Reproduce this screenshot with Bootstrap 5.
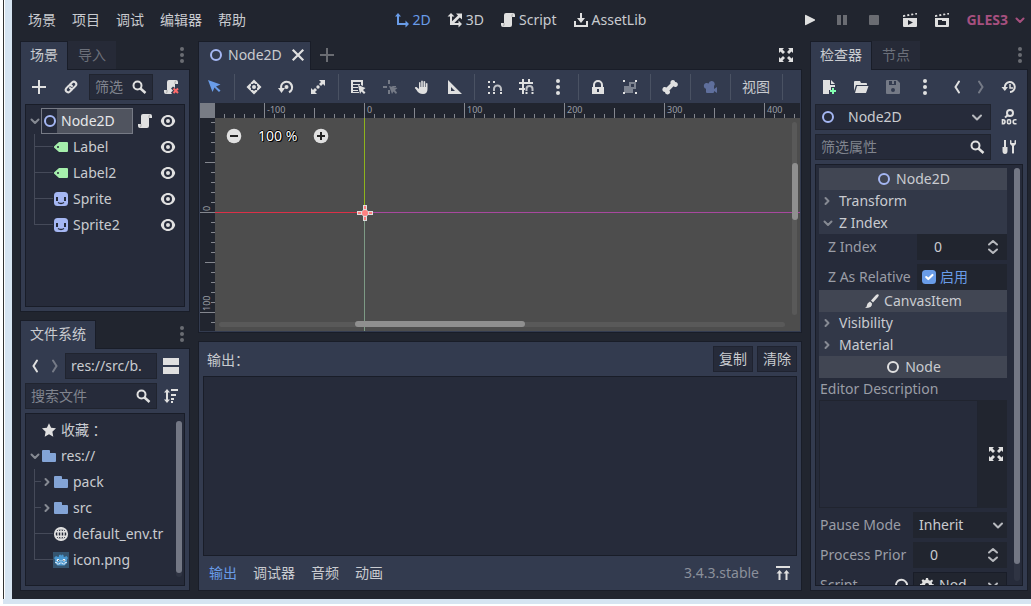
<!DOCTYPE html>
<html lang="zh-CN">
<head>
<meta charset="utf-8">
<meta name="viewport" content="width=device-width, initial-scale=1">
<title>Godot Engine - Node2D</title>
<link href="https://cdn.jsdelivr.net/npm/bootstrap@5.3.0/dist/css/bootstrap.min.css" rel="stylesheet">
<style>
:root{--bg:#21252f;--panel:#333b4f;--dark:#262b3a;--edge:#191d28;--text:#c9cbd0;--dim:#8f939d;--accent:#699ce8;--icon:#e0e0e0}
body{font:14px/20px "Noto Sans","Noto Sans CJK SC",sans-serif;color:var(--text);background:#d6e4f1;overflow:hidden}
.desk{border-bottom:2px solid #fff;border-left:3px solid #fff;padding:0 0 5px 0}
.desk-edge{width:9px;flex:none;border-left:1px solid #333;box-shadow:inset 1px 0 #fff}
.editor{background:var(--bg);min-width:0}
svg{display:block;flex:none}
.ic{width:16px;height:16px;fill:var(--icon);color:var(--icon)}
.off{opacity:.38}
.blue{color:#a5b7f3}
.colon{font-family:"Noto Sans CJK TC",sans-serif}
button{background:none;border:0;padding:0;color:inherit;font:inherit}
.topbar{display:grid;grid-template-columns:1fr auto 1fr;height:40px;padding:0 3px 0 0}
.topbar a,.bottom a{color:var(--text);text-decoration:none}
.topbar .modes a{display:flex;align-items:center;gap:3px}
.topbar a.on,.bottom a.on{color:var(--accent)}
.topbar a.on .ic{fill:var(--accent);color:var(--accent)}
.work{display:grid;grid-template-columns:170px minmax(0,1fr) 218px;gap:8px;padding:1px 3px 8px 8px;min-height:0}
.work>div{min-height:0;min-width:0;gap:8px}
.dock{min-height:0}
.half{flex:1 1 0}
.tabs{height:28px;flex:none}
.tabs .nav-tab{height:28px;padding:0 10px;background:#262a37;color:#6c707a}
.tabs .nav-tab.on{height:29px;padding:0 9px 2px;background:var(--panel);color:var(--text);border:1px solid var(--edge);border-bottom:0;position:relative;z-index:1}
.pane{background:var(--panel);border:1px solid var(--edge);padding:4px;min-height:0}
.bar{height:26px;margin-bottom:4px;flex:none}
.bar .sq,.bar .slim{width:28px;height:26px;display:flex;align-items:center;justify-content:center;flex:none}
.bar .slim{width:20px}
.field{background:var(--dark);border:1px solid #20242f;height:26px;min-width:0;display:flex;align-items:center;padding:0 5px}
.field input:not(.form-check-input),.field select{background:transparent;border:0;outline:0;color:var(--text);padding:0;min-width:0;width:100%;font:inherit;border-radius:0;box-shadow:none}
.field input::placeholder{color:#80848e;opacity:1}
.form-select{--bs-form-select-bg-img:url("data:image/svg+xml,%3csvg xmlns='http://www.w3.org/2000/svg' viewBox='0 0 16 16'%3e%3cpath fill='none' stroke='%23b8babf' stroke-width='2' stroke-linecap='round' stroke-linejoin='round' d='M4 6.5l4 4 4-4'/%3e%3c/svg%3e");background-image:var(--bs-form-select-bg-img)!important;background-repeat:no-repeat!important;background-position:right center!important;background-size:16px 16px!important;cursor:default}
.tree{background:var(--dark);border:1px solid var(--edge);min-height:0;overflow:hidden;padding-top:3px}
.item{height:26px;white-space:nowrap}
.stem{width:19px;height:26px;margin-left:8px;flex:none;background:linear-gradient(#454a59,#454a59) 0 0/1px 100% no-repeat,linear-gradient(#454a59,#454a59) 0 12px/100% 1px no-repeat}
.stem.end{background-size:1px 13px,100% 1px}
.stem.short{width:7px}
.twist{width:12px;height:16px;color:#868a93}
.root-twist{margin-left:3px}
.picked{border:1px solid #767a85;background:#50545f;width:92px;height:26px;color:#e6e7ea}
.picked span:first-child{background:var(--dark);width:15px;height:24px}
.btns>*{width:32px;display:flex;justify-content:center;align-items:center;height:33px}
.btns>:first-child{width:31px}
.btns>.vr-line{width:8px}
.vr-line::before{content:"";width:1px;height:26px;background:#4a5263}
.canvas-grid{display:grid;grid-template:15px minmax(0,1fr)/15px minmax(0,1fr);min-height:0;margin:0 1px 1px}
.ruler{background:var(--bg)}
.ruler text{font-size:9px;fill:#9a9da4}
.stage{background:#4d4d4d;position:relative;overflow:hidden}
.stage>*{position:absolute}
.ax-neg{left:0;width:149px;top:94px;height:1px;background:#dc3048}
.ax-pos{left:149px;right:0;top:94px;height:1px;background:#a8489f}
.ax-up{top:0;height:94px;left:149px;width:1px;background:#8eb31c}
.ax-down{top:94px;bottom:0;left:149px;width:1px;background:#7d9a85}
.zoomer{left:11px;top:8px;height:20px}
.zoomer span{color:#fff;text-shadow:1px 1px #000,-1px 0 #000,0 -1px #000,1px 0 #000}
.track{background:#595959;border-radius:3px}
.thumb{background:#8f8f8f;border-radius:3px;position:absolute}
.hbar{left:4px;right:15px;bottom:4px;height:5px}.hbar .thumb{left:24%;width:30%;top:-1px;height:6px}
.vbar{right:3px;top:4px;bottom:16px;width:5px}.vbar .thumb{top:21%;height:30%;left:0;width:6px}
.darkbtn{background:var(--dark);border:1px solid #1f2330;height:26px;padding:0 5px;border-radius:0}
.log{background:var(--dark);border:1px solid var(--edge);height:180px;resize:none;border-radius:0;display:block;width:100%;outline:0;color:var(--text)}
.bottom{height:34px;padding:0 6px}
.cat{background:#414653;height:22px}
.sect{background:#323848;height:22px}
.prop{height:26px}
.prop label,.lbl{color:#9a9da6;white-space:nowrap;overflow:hidden;padding-left:1px}
.prop .field{background:var(--bg);border-color:var(--bg);height:26px;flex:none}
.w-a{width:90px}.w-b{width:94px}
.form-check-input{margin:0;width:14px;height:14px;border:0;border-radius:2px;flex:none}
.form-check-input:checked{background-color:var(--accent)}
.note-box{background:var(--bg)}
.note-box button{width:32px;padding-left:10px}
.note{background:var(--dark);border:1px solid #20242f;height:108px;resize:none;border-radius:0;outline:0;min-width:0;color:var(--text)}
.rail{width:6px;flex:none;background:#2f3443;border-radius:3px}
.rail div{background:#737784;border-radius:3px}
.api{color:#a6507f!important;font-weight:700}
</style>
</head>
<body class="m-0">
<svg width="0" height="0" class="position-absolute" aria-hidden="true">
<defs>
<symbol id="ring" viewBox="0 0 16 16"><circle cx="8" cy="8" r="5" fill="none" stroke="currentColor" stroke-width="2"/></symbol>
<symbol id="plus" viewBox="0 0 16 16"><path d="M7 1h2v6h6v2H9v6H7V9H1V7h6z"/></symbol>
<symbol id="cross" viewBox="0 0 16 16"><path d="M3.500 3.500l9 9m0-9l-9 9" fill="none" stroke="currentColor" stroke-width="2.200" stroke-linecap="square"/></symbol>
<symbol id="link" viewBox="0 0 16 16"><g fill="none" stroke="currentColor" stroke-width="2" stroke-linecap="round"><path d="M7 5.500L9.300 3.200a2.500 2.500 0 0 1 3.500 3.500L10.500 9a2.500 2.500 0 0 1-3.500 0"/><path d="M9 10.500l-2.300 2.300a2.500 2.500 0 0 1-3.500-3.500L5.500 7a2.500 2.500 0 0 1 3.500 0"/></g></symbol>
<symbol id="search" viewBox="0 0 16 16"><circle cx="6.500" cy="6.500" r="4" fill="none" stroke="currentColor" stroke-width="2"/><path d="M9.500 9.500l5 4.500" stroke="currentColor" stroke-width="2.500"/></symbol>
<symbol id="script" viewBox="0 0 16 16"><path d="M6 1a2 2 0 0 0-2 2v8H1v2a2 2 0 0 0 2 2h7a2 2 0 0 0 2-2V5h3V3a2 2 0 0 0-2-2z"/><path d="M12 5V3a1 1 0 0 1 1-1M4 11v2a1 1 0 0 1-1 1" fill="none" stroke="#aaa" stroke-width="1"/></symbol>
<symbol id="scriptx" viewBox="0 0 16 16"><path d="M6 1a2 2 0 0 0-2 2v8H1v2a2 2 0 0 0 2 2h6l-1-1.500 2-2L8 9.500l2-2 2 1.500V5h3V3a2 2 0 0 0-2-2z"/><path d="M12 5V3a1 1 0 0 1 1-1M4 11v2a1 1 0 0 1-1 1" fill="none" stroke="#aaa"/><path d="M10.500 9.500l4.500 4.500m0-4.500l-4.500 4.500" stroke="#ff6b6b" stroke-width="2"/></symbol>
<symbol id="eye" viewBox="0 0 16 16"><path fill-rule="evenodd" d="M8 2C4.500 2 2 4.300.900 7.500v1C2 11.700 4.500 14 8 14s6-2.300 7.100-5.500v-1C14 4.300 11.500 2 8 2zm0 2a4 4 0 1 1 0 8 4 4 0 0 1 0-8zm0 2a2 2 0 1 0 0 4 2 2 0 0 0 0-4z"/></symbol>
<symbol id="tag" viewBox="0 0 16 16"><path fill="#a5efac" fill-rule="evenodd" d="M6 3L1 7.500v1L6 13h8a1 1 0 0 0 1-1V4a1 1 0 0 0-1-1zM5 7a1 1 0 1 1 0 2 1 1 0 0 1 0-2z"/></symbol>
<symbol id="face" viewBox="0 0 16 16"><rect x="1" y="1" width="14" height="14" rx="3.500" fill="#a5b7f3"/><path fill="#262b3a" d="M3 6h2v4H3zM11 6h2v4h-2z"/><path d="M5 11.500q3 2 6 0" fill="none" stroke="#262b3a" stroke-width="1.500"/></symbol>
<symbol id="down" viewBox="0 0 16 16"><path d="M4.500 6.500L8 10l3.500-3.500" fill="none" stroke="currentColor" stroke-width="2" stroke-linecap="round" stroke-linejoin="round"/></symbol>
<symbol id="right" viewBox="0 0 16 16"><path d="M6.500 5L9.500 8l-3 3" fill="none" stroke="currentColor" stroke-width="2" stroke-linecap="round" stroke-linejoin="round"/></symbol>
<symbol id="fwd" viewBox="0 0 16 16"><path d="M6 2.500L9.500 8 6 13.500" fill="none" stroke="currentColor" stroke-width="2" stroke-linecap="round"/></symbol>
<symbol id="back" viewBox="0 0 16 16"><path d="M10 2.500L6.500 8l3.500 5.500" fill="none" stroke="currentColor" stroke-width="2" stroke-linecap="round"/></symbol>
<symbol id="dots" viewBox="0 0 16 16"><circle cx="8" cy="2" r="2"/><circle cx="8" cy="8" r="2"/><circle cx="8" cy="14" r="2"/></symbol>
<symbol id="split" viewBox="0 0 16 16"><path d="M0 0h16v7H0zM0 9h16v7H0z"/></symbol>
<symbol id="sort" viewBox="0 0 16 16"><path d="M4 1L1 4.500h2v7H1L4 15l3-3.500H5v-7h2zM8 1h7v2H8zM8 6h5v2H8zM8 10h3v2H8zM8 13h2v2H8z"/></symbol>
<symbol id="star" viewBox="0 0 16 16"><path d="M8 1.200l2.100 4.500 4.900.600-3.600 3.400.900 5L8 12.300l-4.300 2.400.900-5L1 6.300l4.900-.600z"/></symbol>
<symbol id="folder" viewBox="0 0 16 16"><path fill="#83a4d6" d="M2 2a1 1 0 0 0-1 1v10a1 1 0 0 0 1 1h12a1 1 0 0 0 1-1V6a1 1 0 0 0-1-1H9V3a1 1 0 0 0-1-1z"/></symbol>
<symbol id="globe" viewBox="0 0 16 16"><g fill="none" stroke="currentColor" stroke-width="1.500"><circle cx="8" cy="8" r="6.200" stroke-width="1.800"/><ellipse cx="8" cy="8" rx="3" ry="6"/><path d="M2 5.800h12M2 10.200h12M8 2v12"/></g></symbol>
<symbol id="godot" viewBox="0 0 16 16"><path fill="#355570" d="M0 0h16v16H0z"/><path fill="#4a98d0" d="M1 6l2-2 2 1 1-.500L6 3l1.500-.500L8 3.500h.5L9 2.500l1.500.500v1.500l1 .5 2-1 1.500 2-1 1.500V11l-2.500 2.500h-7L2 11V7.500z"/><circle cx="5" cy="8.200" r="1.300" fill="#fff"/><circle cx="11" cy="8.200" r="1.300" fill="#fff"/><path d="M5 8.500h.8M10.500 8.500h.8" stroke="#333" stroke-width="1"/><path d="M2 10.500h2v1.500h2.500v-1h3v1H12v-1.500h2M8 8v1.500" fill="none" stroke="#e4eef6" stroke-width=".8"/></symbol>
<symbol id="ax2" viewBox="0 0 16 16"><path d="M4 1L1 4.500h2V13h8.500v2.500L15 12l-3.500-3.500V11H5V4.500h2z"/></symbol>
<symbol id="ax3" viewBox="0 0 16 16"><path d="M4 1L.500 4.500H3V13h8.500v2.500L15 12l-3.500-3.500V11H7.300L12.800 5.500 15 7.500V1.500H9L11 3.500 5 9.300V4.500h2.500z"/></symbol>
<symbol id="dl" viewBox="0 0 16 16"><path d="M7 1h2v5h3l-4 5-4-5h3zM1 9h2v4h10V9h2v6H1z"/></symbol>
<symbol id="play" viewBox="0 0 16 16"><path d="M3 3.500q0-1 1-.500l9 4.500v1L4 13q-1 .500-1-.500z"/></symbol>
<symbol id="pause" viewBox="0 0 16 16"><path d="M3 3h4v10H3zM9 3h4v10H9z"/></symbol>
<symbol id="stop" viewBox="0 0 16 16"><rect x="3" y="3" width="10" height="10" rx="1"/></symbol>
<symbol id="clap" viewBox="0 0 16 16"><path fill-rule="evenodd" d="M1 6h14v8a1 1 0 0 1-1 1H2a1 1 0 0 1-1-1zm5 2v5l5-2.500zM1 3.200l2-.400.500 1.700-2.500.400zM5 2.500l2-.400.500 1.700-2 .400zM9 1.800l2-.400.500 1.700-2 .400zM13 1.200l2-.300V2.500l-1.500.300z"/></symbol>
<symbol id="clapf" viewBox="0 0 16 16"><path fill-rule="evenodd" d="M1 6h14v8a1 1 0 0 1-1 1H2a1 1 0 0 1-1-1zm3 2v5h8V9H8V8zM1 3.200l2-.400.500 1.700-2.500.400zM5 2.500l2-.400.500 1.700-2 .400zM9 1.800l2-.400.500 1.700-2 .400zM13 1.200l2-.300V2.500l-1.500.300z"/></symbol>
<symbol id="full" viewBox="0 0 16 16"><path d="M1 1h5L4.500 2.500l2.500 2.500-2 2-2.500-2.500L1 6zM15 1v5l-1.500-1.500L11 7 9 5l2.500-2.500L10 1zM1 15v-5l1.500 1.500L5 9l2 2-2.500 2.500L6 15zM15 15h-5l1.500-1.500L9 11l2-2 2.500 2.500L15 10z"/></symbol>
<symbol id="cursor" viewBox="0 0 16 16"><path d="M1 1l4.500 12 2-4.500 4.500 4.500 1.500-1.500L9 7.500l4.500-2z"/></symbol>
<symbol id="move" viewBox="0 0 16 16"><circle cx="8" cy="8" r="2"/><path d="M8 .500L4.500 4v1h2.200L8 4l1.300 1h2.200V4zM8 15.500L4.500 12v-1h2.200L8 12l1.300-1h2.200v1zM.500 8L4 4.500h1v2.200L4 8l1 1.300v2.200H4zM15.500 8L12 4.500h-1v2.200L12 8l-1 1.300v2.200h1z"/></symbol>
<symbol id="rotate" viewBox="0 0 16 16"><path d="M3.200 9.500A5.500 5.500 0 1 1 11 13.200" fill="none" stroke="currentColor" stroke-width="2.200"/><path d="M0 9h7l-3.500 5z"/><circle cx="8.500" cy="8" r="2"/></symbol>
<symbol id="reload" viewBox="0 0 16 16"><path d="M3.200 9.500A5.500 5.500 0 1 1 11 13.200" fill="none" stroke="currentColor" stroke-width="2"/><path d="M0 8h7l-3.500 5z"/></symbol>
<symbol id="scale" viewBox="0 0 16 16"><path d="M9 1h6v6l-2-2-2 2-2-2 2-2zM7 15H1V9l2 2 2-2 2 2-2 2z"/><circle cx="8" cy="8" r="1.700"/></symbol>
<symbol id="list" viewBox="0 0 16 16"><path fill-rule="evenodd" d="M1 1h12v6l-2-1V3H3v2h7v1H3v2h5v1H3v2h5v1H3v1h6v1H1z"/><path d="M8 6l2 9 1.500-2.500L14 15l1.500-1.500L13 11l2.500-2z"/></symbol>
<symbol id="pivot" viewBox="0 0 16 16"><path d="M6 1h2v4H6zM1 7h4v2H1zM10 7h4v1h-4zM6 11h2v4H6zM7 7l3 8 1.500-2.500L14 15l1-1.500L13 11l2.500-2z"/></symbol>
<symbol id="hand" viewBox="0 0 16 16"><path d="M5 3.500q1-1 1.500 0V8h.7V2q.8-1.200 1.600 0v6h.7V2.500q.9-1 1.700 0V8h.6V4.500q1-1 1.700 0V10q0 5-4.500 5T2.500 11L.800 9q.200-1.500 1.700-1L5 10z"/></symbol>
<symbol id="tri" viewBox="0 0 16 16"><path fill-rule="evenodd" d="M2 1v14h14zm3 7l4 4H5z"/></symbol>
<symbol id="snap" viewBox="0 0 16 16"><path d="M2 2h2v2H2zM7 2h2v2H7zM2 7h2v2H2zM2 13h2v2H2zM7 13h2v2H7zM14 13h2v2h-2z"/><path d="M8 12v-2a3.500 3.500 0 0 1 7 0v2" fill="none" stroke="#bfc1c6" stroke-width="2"/></symbol>
<symbol id="grid" viewBox="0 0 16 16"><path d="M4 0h2v3h4V0h2v3h3v2H6v4h1v2H6v4H4v-4H1V9h3V5H1V3h3z"/><path d="M8.500 12v-2a3 3 0 0 1 6 0v2" fill="none" stroke="#bfc1c6" stroke-width="2"/><path d="M7.500 13h2v2h-2zM13.500 13h2v2h-2z"/></symbol>
<symbol id="lock" viewBox="0 0 16 16"><path fill-rule="evenodd" d="M8 1a5 5 0 0 0-5 5v2H2v7h12V8h-1V6a5 5 0 0 0-5-5zm0 2a3 3 0 0 1 3 3v2H5V6a3 3 0 0 1 3-3zM7 10h2v3H7z"/></symbol>
<symbol id="group" viewBox="0 0 16 16"><path fill="#7d8390" fill-rule="evenodd" d="M7 3h7v7h-3v4H2V7h5zm2 2v3h3V5z"/><path d="M1 1h2v2H1zM13 1h2v2h-2zM1 13h2v2H1zM13 13h2v2h-2z"/></symbol>
<symbol id="bone" viewBox="0 0 16 16"><path d="M11 1a2.500 2.500 0 0 0-2.400 3.400L4.500 8.600A2.500 2.500 0 1 0 3 13a2.500 2.500 0 1 0 4.400-1.600l4.100-4.200A2.500 2.500 0 1 0 13.200 3 2.400 2.400 0 0 0 11 1z"/></symbol>
<symbol id="cam" viewBox="0 0 16 16"><path fill="#5f6f9c" d="M9.500 2A3 3 0 0 0 6.600 4.500 3 3 0 1 0 4 9.800V13a1 1 0 0 0 1 1h6a1 1 0 0 0 1-1v-1l3 2V8l-3 2V7A3 3 0 0 0 9.500 2z"/></symbol>
<symbol id="newdoc" viewBox="0 0 16 16"><path d="M2 1h7v5h5v2h-4v3H8v4H2zM10 1l4 4h-4z"/><path fill="#84ffb1" d="M11 9h2v2h2v2h-2v2h-2v-2H9v-2h2z"/></symbol>
<symbol id="load" viewBox="0 0 16 16"><path d="M2 2a1 1 0 0 0-1 1v9l2-6h11V5a1 1 0 0 0-1-1H8L7 2zM4 7h11.500l-2.300 6.500q-.200.500-1 .500H2z"/></symbol>
<symbol id="save" viewBox="0 0 16 16"><path fill-rule="evenodd" d="M2 1h10l3 3v10a1 1 0 0 1-1 1H2a1 1 0 0 1-1-1V2a1 1 0 0 1 1-1zm2 1v4h7V2H9v3H7V2zm4 7a2 2 0 1 0 0 4 2 2 0 0 0 0-4z"/></symbol>
<symbol id="hist" viewBox="0 0 16 16"><path d="M3.800 8.500A5 5 0 1 1 9 13" fill="none" stroke="currentColor" stroke-width="2"/><path d="M.500 8h6.500L3.800 12z"/><path d="M9 5v4h3" fill="none" stroke="currentColor" stroke-width="1.500"/></symbol>
<symbol id="doc" viewBox="0 0 16 16"><circle cx="9" cy="4" r="3" fill="none" stroke="currentColor" stroke-width="2"/><path d="M7 6L4 8.500" stroke="currentColor" stroke-width="2"/><path d="M1.500 10.700v4h.500q2 0 2-2t-2-2z" fill="none" stroke="currentColor" stroke-width="1.600"/><rect x="6.500" y="10.700" width="3" height="4" rx="1" fill="none" stroke="currentColor" stroke-width="1.600"/><path d="M15.500 10.700h-1.500q-1.800 0-1.800 2t1.800 2h1.500" fill="none" stroke="currentColor" stroke-width="1.600"/></symbol>
<symbol id="tools" viewBox="0 0 16 16"><path d="M3 1h2v7h1.500v4q0 3-2.500 3t-2.500-3V8H3zM9 1v4l2 2v7q1 1.500 2 0V7l2-2V1l-1.500.500V4h-3V1.500z"/></symbol>
<symbol id="brush" viewBox="0 0 16 16"><path d="M14.500 1.500q1 1-1 3L9 9.500 7 7.500l4.500-5q2-2 3-1zM6 8.500L8 10.500q.500 4.500-7 4.500 2-1 2-3t3-3.500z"/></symbol>
<symbol id="spin" viewBox="0 0 16 16"><path d="M4 5.500L8 2l4 3.500M4 10.500L8 14l4-3.500" fill="none" stroke="#b8babf" stroke-width="2" stroke-linecap="round" stroke-linejoin="round"/></symbol>
<symbol id="up2" viewBox="0 0 16 16"><path d="M1 1h14v2H1zM4.500 5l3 3.500h-2V15h-2V8.500h-2zM11.500 5l3 3.500h-2V15h-2V8.500h-2z"/></symbol>
<symbol id="gear" viewBox="0 0 16 16"><path fill-rule="evenodd" d="M7 1h2l.5 2 1.600.7L13 2.500 14 4l-1.300 1.600.5 1.400 1.800.500v2l-2 .500-.700 1.500 1 1.900-1.500 1.300-1.900-1-1.400.500L8 15l-1.500-1.300-1.400-.500-1.800.800L2 12.500 3.200 11l-.700-1.500-1.500-.500V7l2-.500.500-1.400L2.500 3.500 4 2.200l1.600 1L6.500 3zm1 5a2 2 0 1 0 0 4 2 2 0 0 0 0-4z"/></symbol>
<symbol id="zin" viewBox="0 0 16 16"><circle cx="8" cy="8" r="7.300"/><path d="M4 8h8M8 4v8" stroke="#222" stroke-width="2"/></symbol>
<symbol id="zout" viewBox="0 0 16 16"><circle cx="8" cy="8" r="7.300"/><path d="M4 8h8" stroke="#222" stroke-width="2"/></symbol>
<pattern id="tickx" x="49" width="100" height="15" patternUnits="userSpaceOnUse"><path fill="#84878f" d="M0 0h1v15H0zM50 5h1v10h-1zM10 11h1v4h-1zM20 11h1v4h-1zM30 11h1v4h-1zM40 11h1v4h-1zM60 11h1v4h-1zM70 11h1v4h-1zM80 11h1v4h-1zM90 11h1v4h-1z"/></pattern>
<pattern id="ticky" y="-6" width="15" height="100" patternUnits="userSpaceOnUse"><path fill="#84878f" d="M0 0h15v1H0zM5 50h10v1H5zM11 10h4v1h-4zM11 20h4v1h-4zM11 30h4v1h-4zM11 40h4v1h-4zM11 60h4v1h-4zM11 70h4v1h-4zM11 80h4v1h-4zM11 90h4v1h-4z"/></pattern>
</defs>
</svg>

<div class="desk vh-100 d-flex">
<div class="desk-edge"></div>
<div class="editor flex-grow-1 d-flex flex-column">
  <header class="topbar align-items-center flex-shrink-0">
    <nav class="d-flex gap-3 ps-3 ms-n1"><a href="#">场景</a><a href="#">项目</a><a href="#">调试</a><a href="#">编辑器</a><a href="#">帮助</a></nav>
    <nav class="modes d-flex gap-3">
      <a href="#" class="on"><svg class="ic"><use href="#ax2"/></svg>2D</a>
      <a href="#"><svg class="ic"><use href="#ax3"/></svg>3D</a>
      <a href="#"><svg class="ic"><use href="#script"/></svg>Script</a>
      <a href="#"><svg class="ic"><use href="#dl"/></svg>AssetLib</a>
    </nav>
    <div class="d-flex align-items-center justify-content-end gap-3">
      <button aria-label="运行"><svg class="ic"><use href="#play"/></svg></button>
      <button aria-label="暂停"><svg class="ic off"><use href="#pause"/></svg></button>
      <button aria-label="停止" class="me-1"><svg class="ic off"><use href="#stop"/></svg></button>
      <button aria-label="运行场景"><svg class="ic"><use href="#clap"/></svg></button>
      <button aria-label="运行自定义场景"><svg class="ic"><use href="#clapf"/></svg></button>
      <button class="api d-flex align-items-center gap-1">GLES3<svg width="16" height="16"><use href="#down"/></svg></button>
    </div>
  </header>

  <main class="work flex-grow-1">
    <div class="d-flex flex-column">
      <section class="dock half d-flex flex-column">
        <div class="tabs d-flex"><button class="nav-tab on">场景</button><button class="nav-tab">导入</button><button class="ms-auto align-self-center" aria-label="菜单"><svg class="ic off"><use href="#dots"/></svg></button></div>
        <div class="pane flex-grow-1 d-flex flex-column">
          <div class="bar d-flex gap-1">
            <button class="sq" aria-label="添加"><svg class="ic"><use href="#plus"/></svg></button>
            <button class="sq" aria-label="实例化"><svg class="ic"><use href="#link"/></svg></button>
            <div class="field flex-grow-1"><input aria-label="筛选" placeholder="筛选"><svg class="ic"><use href="#search"/></svg></div>
            <button class="sq" aria-label="移除脚本"><svg class="ic"><use href="#scriptx"/></svg></button>
          </div>
          <div class="tree flex-grow-1 pe-2">
            <div class="item d-flex align-items-center"><svg class="twist root-twist" viewBox="2 0 12 16"><use href="#down" width="16" height="16"/></svg>
              <div class="picked d-flex align-items-center me-1"><span class="d-flex align-items-center"><svg class="ic blue"><use href="#ring"/></svg></span><span class="ps-1">Node2D</span></div>
              <svg class="ic"><use href="#script"/></svg><svg class="ic ms-auto"><use href="#eye"/></svg></div>
            <div class="item d-flex align-items-center"><i class="stem"></i><svg class="ic me-1"><use href="#tag"/></svg>Label<svg class="ic ms-auto"><use href="#eye"/></svg></div>
            <div class="item d-flex align-items-center"><i class="stem"></i><svg class="ic me-1"><use href="#tag"/></svg>Label2<svg class="ic ms-auto"><use href="#eye"/></svg></div>
            <div class="item d-flex align-items-center"><i class="stem"></i><svg class="ic me-1"><use href="#face"/></svg>Sprite<svg class="ic ms-auto"><use href="#eye"/></svg></div>
            <div class="item d-flex align-items-center"><i class="stem end"></i><svg class="ic me-1"><use href="#face"/></svg>Sprite2<svg class="ic ms-auto"><use href="#eye"/></svg></div>
          </div>
        </div>
      </section>
      <section class="dock half d-flex flex-column">
        <div class="tabs d-flex"><button class="nav-tab on">文件系统</button><button class="ms-auto align-self-center" aria-label="菜单"><svg class="ic off"><use href="#dots"/></svg></button></div>
        <div class="pane flex-grow-1 d-flex flex-column">
          <div class="bar d-flex">
            <button class="slim" aria-label="后退"><svg class="ic"><use href="#back"/></svg></button>
            <button class="slim" aria-label="前进"><svg class="ic off"><use href="#fwd"/></svg></button>
            <div class="field flex-grow-1"><input aria-label="路径" value="res://src/b."></div>
            <button class="sq" aria-label="拆分模式"><svg class="ic"><use href="#split"/></svg></button>
          </div>
          <div class="bar d-flex">
            <div class="field flex-grow-1"><input aria-label="搜索文件" placeholder="搜索文件"><svg class="ic"><use href="#search"/></svg></div>
            <button class="sq" aria-label="排序"><svg class="ic"><use href="#sort"/></svg></button>
          </div>
          <div class="tree flex-grow-1 d-flex" style="padding-right:2px">
            <div class="flex-grow-1 overflow-hidden">
              <div class="item d-flex align-items-center"><svg class="twist root-twist"></svg><svg class="ic me-1"><use href="#star"/></svg>收藏<span class="colon">：</span></div>
              <div class="item d-flex align-items-center"><svg class="twist root-twist" viewBox="2 0 12 16"><use href="#down" width="16" height="16"/></svg><svg class="ic me-1"><use href="#folder"/></svg>res://</div>
              <div class="item d-flex align-items-center"><i class="stem short"></i><svg class="twist" viewBox="2 0 12 16"><use href="#right" width="16" height="16"/></svg><svg class="ic me-1"><use href="#folder"/></svg>pack</div>
              <div class="item d-flex align-items-center"><i class="stem short"></i><svg class="twist" viewBox="2 0 12 16"><use href="#right" width="16" height="16"/></svg><svg class="ic me-1"><use href="#folder"/></svg>src</div>
              <div class="item d-flex align-items-center"><i class="stem"></i><svg class="ic me-1"><use href="#globe"/></svg>default_env.tr</div>
              <div class="item d-flex align-items-center"><i class="stem end"></i><svg class="ic me-1"><use href="#godot"/></svg>icon.png</div>
            </div>
            <div class="rail mt-1 mb-2 pb-1"><div class="h-100"></div></div>
          </div>
        </div>
      </section>
    </div>

    <div class="d-flex flex-column">
      <section class="dock flex-grow-1 d-flex flex-column">
        <div class="tabs d-flex align-items-start">
          <div class="nav-tab on d-flex align-items-center pe-1"><svg class="ic me-1 blue"><use href="#ring"/></svg>Node2D<button class="ms-2" aria-label="关闭"><svg class="ic"><use href="#cross"/></svg></button></div>
          <button class="align-self-center ms-2" aria-label="新场景"><svg class="ic off"><use href="#plus"/></svg></button>
          <button class="ms-auto px-2 align-self-center" aria-label="专注模式"><svg class="ic"><use href="#full"/></svg></button>
        </div>
        <div class="pane flex-grow-1 d-flex flex-column p-0">
          <div class="btns d-flex flex-shrink-0">
            <button aria-label="选择"><svg class="ic" style="fill:#699ce8"><use href="#cursor"/></svg></button><span class="vr-line"></span>
            <button aria-label="移动"><svg class="ic"><use href="#move"/></svg></button><button aria-label="旋转"><svg class="ic"><use href="#rotate"/></svg></button><button aria-label="缩放"><svg class="ic"><use href="#scale"/></svg></button><span class="vr-line"></span>
            <button aria-label="列表选择"><svg class="ic"><use href="#list"/></svg></button><button aria-label="轴心"><svg class="ic off"><use href="#pivot"/></svg></button><button aria-label="平移"><svg class="ic"><use href="#hand"/></svg></button><button aria-label="标尺"><svg class="ic"><use href="#tri"/></svg></button><span class="vr-line"></span>
            <button aria-label="智能吸附"><svg class="ic"><use href="#snap"/></svg></button><button aria-label="栅格吸附"><svg class="ic"><use href="#grid"/></svg></button><button aria-label="吸附选项"><svg class="ic"><use href="#dots"/></svg></button><span class="vr-line"></span>
            <button aria-label="锁定"><svg class="ic"><use href="#lock"/></svg></button><button aria-label="编组"><svg class="ic"><use href="#group"/></svg></button><span class="vr-line"></span>
            <button aria-label="骨骼"><svg class="ic"><use href="#bone"/></svg></button><span class="vr-line"></span>
            <button aria-label="摄像机"><svg class="ic"><use href="#cam"/></svg></button><span class="vr-line"></span>
            <button style="width:44px">视图</button><span class="vr-line"></span>
          </div>
          <div class="canvas-grid flex-grow-1">
            <div style="background:#787c85"></div>
            <svg class="ruler" width="100%" height="15"><rect width="100%" height="15" fill="url(#tickx)"/><text x="52" y="10">-100</text><text x="152" y="10">0</text><text x="252" y="10">100</text><text x="352" y="10">200</text><text x="452" y="10">300</text><text x="552" y="10">400</text></svg>
            <svg class="ruler" width="15" height="100%"><rect width="15" height="100%" fill="url(#ticky)"/><text transform="translate(10 93) rotate(-90)">0</text><text transform="translate(10 193) rotate(-90)">100</text></svg>
            <div class="stage">
              <div class="ax-up"></div><div class="ax-down"></div><div class="ax-neg"></div><div class="ax-pos"></div>
              <svg width="16" height="16" style="left:142px;top:87px"><path fill="#ddd" d="M6 0h4v5l1 1h5v4h-5l-1 1v5H6v-5l-1-1H0V6h5l1-1z"/><path fill="#ff7c7c" d="M7 1h2v3H7zM7 12h2v3H7zM1 7h3v2H1zM12 7h3v2h-3z"/><circle cx="8" cy="8" r="3" fill="#ff8080"/></svg>
              <div class="zoomer d-flex align-items-center gap-3"><button aria-label="缩小"><svg class="ic"><use href="#zout"/></svg></button><span>100 %</span><button aria-label="放大"><svg class="ic"><use href="#zin"/></svg></button></div>
              <div class="track hbar"><div class="thumb"></div></div><div class="track vbar"><div class="thumb"></div></div>
            </div>
          </div>
        </div>
      </section>
      <section class="pane flex-shrink-0 pb-0">
        <div class="bar d-flex align-items-center gap-1"><label for="log" class="me-auto ps-1">输出<span class="colon">：</span></label><button class="darkbtn">复制</button><button class="darkbtn">清除</button></div>
        <textarea class="log" id="log" readonly></textarea>
        <div class="bottom d-flex align-items-center gap-3"><a href="#" class="on">输出</a><a href="#">调试器</a><a href="#">音频</a><a href="#">动画</a><span class="ms-auto" style="color:#8b909b">3.4.3.stable</span><button aria-label="展开"><svg class="ic"><use href="#up2"/></svg></button></div>
      </section>
    </div>

    <section class="dock d-flex flex-column">
      <div class="tabs d-flex"><button class="nav-tab on">检查器</button><button class="nav-tab">节点</button><button class="ms-auto align-self-center" aria-label="菜单"><svg class="ic off"><use href="#dots"/></svg></button></div>
      <div class="pane flex-grow-1 d-flex flex-column">
        <div class="bar d-flex gap-1">
          <button class="sq" aria-label="新建资源"><svg class="ic"><use href="#newdoc"/></svg></button><button class="sq" aria-label="加载"><svg class="ic"><use href="#load"/></svg></button><button class="sq" aria-label="保存"><svg class="ic off"><use href="#save"/></svg></button><button class="sq" aria-label="选项"><svg class="ic"><use href="#dots"/></svg></button>
          <button class="slim ms-auto" aria-label="上一个"><svg class="ic"><use href="#back"/></svg></button><button class="slim" aria-label="下一个"><svg class="ic off"><use href="#fwd"/></svg></button>
          <button class="sq" aria-label="历史"><svg class="ic"><use href="#hist"/></svg></button>
        </div>
        <div class="bar d-flex gap-1"><div class="field flex-grow-1 ps-1"><svg class="ic me-2 blue"><use href="#ring"/></svg><select class="form-select ps-1" aria-label="节点"><option>Node2D</option></select></div><button class="sq" aria-label="文档"><svg class="ic"><use href="#doc"/></svg></button></div>
        <div class="bar d-flex gap-1"><div class="field flex-grow-1"><input aria-label="筛选属性" placeholder="筛选属性"><svg class="ic"><use href="#search"/></svg></div><button class="sq" aria-label="工具"><svg class="ic"><use href="#tools"/></svg></button></div>
        <div class="tree flex-grow-1 d-flex" style="padding:3px 2px 0 3px">
          <div class="flex-grow-1" style="min-width:0;margin-right:7px">
            <div class="cat d-flex align-items-center justify-content-center gap-1"><svg class="ic blue"><use href="#ring"/></svg>Node2D</div>
            <div class="sect d-flex align-items-center"><svg class="twist ms-1 me-1" viewBox="4 0 12 16"><use href="#right" width="16" height="16"/></svg>Transform</div>
            <div class="sect d-flex align-items-center"><svg class="twist ms-1 me-1" viewBox="3 0 12 16"><use href="#down" width="16" height="16"/></svg>Z Index</div>
            <div class="prop d-flex align-items-center mb-1 ps-2"><label for="z" class="flex-grow-1">Z Index</label><div class="field w-a ps-3"><input id="z" value="0"><svg class="ic"><use href="#spin"/></svg></div></div>
            <div class="prop d-flex align-items-center ps-2"><label for="rel" class="flex-grow-1">Z As Relative</label><div class="field w-a ps-1" style="color:#699ce8"><input class="form-check-input me-1" type="checkbox" id="rel" checked><span>启用</span></div></div>
            <div class="cat d-flex align-items-center justify-content-center gap-1"><svg class="ic"><use href="#brush"/></svg>CanvasItem</div>
            <div class="sect d-flex align-items-center"><svg class="twist ms-1 me-1" viewBox="4 0 12 16"><use href="#right" width="16" height="16"/></svg>Visibility</div>
            <div class="sect d-flex align-items-center"><svg class="twist ms-1 me-1" viewBox="4 0 12 16"><use href="#right" width="16" height="16"/></svg>Material</div>
            <div class="cat d-flex align-items-center justify-content-center gap-1"><svg class="ic"><use href="#ring"/></svg>Node</div>
            <label for="desc" class="lbl d-block" style="height:22px;line-height:22px">Editor Description</label>
            <div class="note-box d-flex mb-1"><textarea class="note flex-grow-1" id="desc"></textarea><button aria-label="展开"><svg class="ic"><use href="#full"/></svg></button></div>
            <div class="prop d-flex align-items-center mb-1"><label for="pm" class="flex-grow-1">Pause Mode</label><div class="field w-b pe-0"><select class="form-select" id="pm"><option>Inherit</option></select></div></div>
            <div class="prop d-flex align-items-center mb-1"><label for="pp" class="flex-grow-1">Process Prior</label><div class="field w-b ps-3"><input id="pp" value="0"><svg class="ic"><use href="#spin"/></svg></div></div>
            <div class="prop d-flex align-items-center"><label for="sc" class="flex-grow-1">Script</label><svg class="ic me-1"><use href="#reload"/></svg><div class="field w-b" style="border-color:#191d28"><svg class="ic me-1"><use href="#gear"/></svg><select class="form-select" id="sc"><option>Nod</option></select></div></div>
          </div>
          <div class="rail mb-1"><div style="height:96%"></div></div>
        </div>
      </div>
    </section>
  </main>
</div>
</div>
<script src="https://cdn.jsdelivr.net/npm/bootstrap@5.3.0/dist/js/bootstrap.bundle.min.js"></script>
</body>
</html>
